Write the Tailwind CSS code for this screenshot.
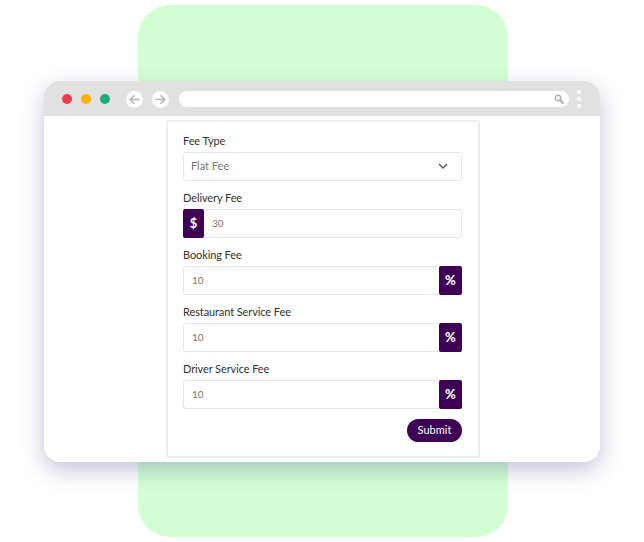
<!DOCTYPE html>
<html lang="en">
<head>
    <meta charset="UTF-8">
    <meta name="viewport" content="width=device-width, initial-scale=1.0">
    <title>Fee Settings</title>
    <script src="https://cdn.jsdelivr.net/npm/@tailwindcss/browser@4"></script>
</head>
<body class="bg-white font-['Lato',sans-serif]">
<div class="relative w-[644px] h-[542px] overflow-hidden pt-[5px]">
    <!-- Green backdrop -->
    <div class="ml-[138px] w-[370px] h-[532px] rounded-[32px] bg-[#d4ffd4]"></div>

    <!-- Browser window -->
    <div class="absolute left-[44px] top-[81px] w-[556px] h-[381px] rounded-[16px] bg-white shadow-[0_8px_22px_rgba(60,60,130,0.3)]">
        <div class="h-[35px] pt-[1px] bg-[#e1e1e1] rounded-t-[16px] flex items-center pl-[18px]">
            <span class="w-[10px] h-[10px] rounded-full bg-[#ee3b4e]"></span>
            <span class="w-[10px] h-[10px] rounded-full bg-[#ffb300] ml-[9px]"></span>
            <span class="w-[10px] h-[10px] rounded-full bg-[#1dab7c] ml-[9px]"></span>
            <span class="w-[17px] h-[17px] rounded-full bg-white ml-[16px] flex items-center justify-center">
                <svg width="11" height="11" viewBox="0 0 11 11" fill="none" stroke="#b5b5b5" stroke-width="1.5" stroke-linecap="round" stroke-linejoin="round"><path d="M10 5.5H1.2M5 1.7L1.2 5.5L5 9.3"/></svg>
            </span>
            <span class="w-[17px] h-[17px] rounded-full bg-white ml-[9px] flex items-center justify-center">
                <svg width="11" height="11" viewBox="0 0 11 11" fill="none" stroke="#b5b5b5" stroke-width="1.5" stroke-linecap="round" stroke-linejoin="round"><path d="M1 5.5H9.8M6 1.7L9.8 5.5L6 9.3"/></svg>
            </span>
            <div class="w-[390px] h-[16px] rounded-full bg-white ml-[10px] flex items-center justify-end pr-[5px]">
                <svg width="10" height="10" viewBox="0 0 10 10" fill="none" stroke="#b0b0b0"><circle cx="4" cy="4" r="2.8" stroke-width="1.4"/><path d="M6.2 6.2L9 9" stroke-width="2" stroke-linecap="round"/></svg>
            </div>
            <div class="ml-[8px] flex flex-col gap-[3px]">
                <span class="w-[4px] h-[4px] rounded-full bg-white"></span>
                <span class="w-[4px] h-[4px] rounded-full bg-white"></span>
                <span class="w-[4px] h-[4px] rounded-full bg-white"></span>
            </div>
        </div>

        <!-- Form card -->
        <div class="ml-[122px] mt-[4px] w-[314px] h-[338px] border-2 border-[#eeeeef] rounded-[3px] pl-[15px] pr-[16px] pt-[11px] text-[11px]">
            <label class="block h-[17px] leading-[15px] mb-[2px] text-[#333] tracking-[-0.1px]">Fee Type</label>
            <div class="h-[29px] mb-[9px] border border-[#e6e6e8] rounded-[3px] flex items-center justify-between pl-[7px] pr-[13px] text-[#777]">
                <span>Flat Fee</span>
                <svg width="10" height="7" viewBox="0 0 10 7" fill="none" stroke="#555" stroke-width="1.4"><path d="M1 1L5 5L9 1"/></svg>
            </div>

            <label class="block h-[17px] leading-[15px] mb-[2px] text-[#333] tracking-[-0.1px]">Delivery Fee</label>
            <div class="h-[29px] mb-[9px] flex text-[#777] text-[10px]">
                <span class="w-[21px] bg-[#3d0054] rounded-[2px] text-white font-bold text-[13px] flex items-center justify-center">$</span>
                <span class="flex-1 border border-l-0 border-[#e6e6e8] rounded-r-[3px] flex items-center pl-[8px]">30</span>
            </div>

            <label class="block h-[17px] leading-[15px] mb-[2px] text-[#333] tracking-[-0.1px]">Booking Fee</label>
            <div class="h-[29px] mb-[9px] flex text-[#777] text-[10px]">
                <span class="flex-1 border border-r-0 border-[#e6e6e8] rounded-l-[3px] flex items-center pl-[8px]">10</span>
                <span class="w-[23px] bg-[#3d0054] rounded-[2px] text-white font-black text-[13px] flex items-center justify-center">%</span>
            </div>

            <label class="block h-[17px] leading-[15px] mb-[2px] text-[#333] tracking-[-0.1px]">Restaurant Service Fee</label>
            <div class="h-[29px] mb-[9px] flex text-[#777] text-[10px]">
                <span class="flex-1 border border-r-0 border-[#e6e6e8] rounded-l-[3px] flex items-center pl-[8px]">10</span>
                <span class="w-[23px] bg-[#3d0054] rounded-[2px] text-white font-black text-[13px] flex items-center justify-center">%</span>
            </div>

            <label class="block h-[17px] leading-[15px] mb-[2px] text-[#333] tracking-[-0.1px]">Driver Service Fee</label>
            <div class="h-[29px] mb-[10px] flex text-[#777] text-[10px]">
                <span class="flex-1 border border-r-0 border-[#e6e6e8] rounded-l-[3px] flex items-center pl-[8px]">10</span>
                <span class="w-[23px] bg-[#3d0054] rounded-[2px] text-white font-black text-[13px] flex items-center justify-center">%</span>
            </div>

            <div class="flex justify-end">
                <button class="w-[55px] h-[23px] rounded-full bg-[#3d0054] text-white">Submit</button>
            </div>
        </div>
    </div>
</div>
</body>
</html>
